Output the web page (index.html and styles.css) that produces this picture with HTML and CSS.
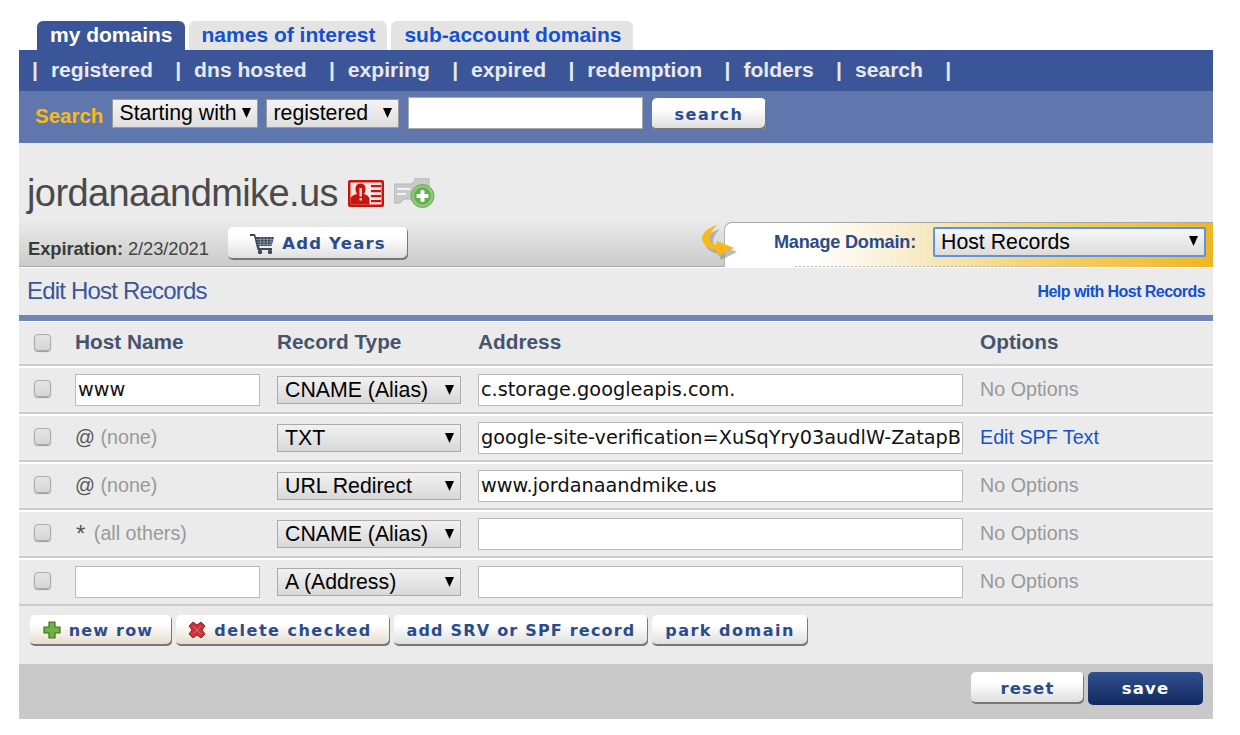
FILE: index.html
```html
<!DOCTYPE html>
<html lang="en">
<head>
<meta charset="utf-8">
<title>Edit Host Records</title>
<link rel="stylesheet" href="styles.css">
</head>
<body>
<div class="page">
  <div class="tabs">
    <a class="tab tab-active">my domains</a>
    <a class="tab">names of interest</a>
    <a class="tab">sub-account domains</a>
  </div>
  <nav class="subnav">
    <span class="pipe">|</span><a>registered</a>
    <span class="pipe">|</span><a>dns hosted</a>
    <span class="pipe">|</span><a>expiring</a>
    <span class="pipe">|</span><a>expired</a>
    <span class="pipe">|</span><a>redemption</a>
    <span class="pipe">|</span><a>folders</a>
    <span class="pipe">|</span><a>search</a>
    <span class="pipe">|</span>
  </nav>
  <div class="searchbar">
    <span class="search-label">Search</span>
    <select class="sel-search s1"><option>Starting with</option></select>
    <select class="sel-search s2"><option>registered</option></select>
    <input class="search-input" type="text">
    <button class="btn btn-search">search</button>
  </div>
  <div class="content">
    <div class="title-row">
      <h1>jordanaandmike.us</h1>
      <svg class="ico-card" width="36" height="27" viewBox="0 0 36 27"><rect x="0" y="0" width="36" height="27" rx="2" fill="#c8140f"/><rect x="2.500" y="2.500" width="31" height="22" fill="#f7e6e3"/><path d="M2.500 24.500 V18 Q4 15 9 14 Q7 11 7.500 8 Q8 3.500 12.500 3.500 Q17 3.500 17.500 8 Q18 11 16 14 Q20 15 21.500 18 V24.500 Z" fill="#c8140f"/><rect x="11.500" y="8" width="2.400" height="8.500" fill="#f7d5d1"/><rect x="11.500" y="18" width="2.400" height="2.500" fill="#f7d5d1"/><rect x="23" y="5" width="10" height="2.200" fill="#c8140f"/><rect x="23" y="10" width="10" height="2.200" fill="#c8140f"/><rect x="23" y="15" width="10" height="2.200" fill="#c8140f"/><rect x="23" y="20" width="10" height="2.200" fill="#c8140f"/></svg>
      <svg class="ico-folder" width="41" height="30" viewBox="0 0 41 30"><path d="M0 6 H17 L21 3 V0 H35 V25 H20 L16 21 H10 L6 25 H0 Z" fill="#c9cbca" stroke="#b5b7b6"/><rect x="3" y="10" width="13" height="2" fill="#f2f2f2"/><rect x="3" y="15" width="9" height="2" fill="#f2f2f2"/><circle cx="28.500" cy="18" r="11.500" fill="#8fca7c" stroke="#6aa858"/><circle cx="28.500" cy="18" r="8.500" fill="#5fb04f"/><rect x="26.500" y="12" width="4" height="12" rx="1" fill="#fff"/><rect x="22.500" y="16" width="12" height="4" rx="1" fill="#fff"/></svg>
    </div>
    <div class="band">
      <div class="expiry"><b>Expiration:</b> 2/23/2021</div>
      <button class="btn btn-years">
        <svg width="24" height="20" viewBox="0 0 24 20"><path d="M0 0 H5 L6 3 H24 L21.500 12 H9 L9.500 14 H22 V16 H7.500 L4 2 H0 Z" fill="#3d4759"/><path d="M6 5.500 H23 M7 8 H22.500 M7.500 10.500 H22 M10.500 3 V12 M14 3 V12 M17.500 3 V12 M21 3 V12" stroke="#8f99a8" stroke-width=".8"/><circle cx="10" cy="18" r="2.200" fill="#3d4759"/><circle cx="20" cy="18" r="2.200" fill="#3d4759"/></svg>
        Add Years
      </button>
      <div class="manage">
        <svg class="ico-arrow" width="36" height="38" viewBox="0 0 36 38"><path d="M15 0 Q0 5 0 14 Q1 23 14 25 L16 31 L32 23 L15 16 L14 20 Q8 19 8 13 Q8 6 15 0 Z" fill="#8f8f8f" opacity=".6" transform="translate(3,4)"/><path d="M15 0 Q0 5 0 14 Q1 23 14 25 L16 31 L32 23 L15 16 L14 20 Q8 19 8 13 Q8 6 15 0 Z" fill="#f8b81c"/></svg>
        <div class="manage-panel">
          <span class="manage-label">Manage Domain:</span>
          <select class="sel-manage"><option>Host Records</option></select>
        </div>
      </div>
    </div>
    <div class="edit-head">
      <h2>Edit Host Records</h2>
      <a class="help">Help with Host Records</a>
    </div>
    <div class="table">
      <div class="row row-head">
        <input type="checkbox" class="chk">
        <span>Host Name</span><span>Record Type</span><span>Address</span><span>Options</span>
      </div>
      <div class="row">
        <input type="checkbox" class="chk">
        <input class="field host" type="text" value="www">
        <select class="sel-type"><option>CNAME (Alias)</option></select>
        <input class="field addr" type="text" value="c.storage.googleapis.com.">
        <span class="muted">No Options</span>
      </div>
      <div class="row">
        <input type="checkbox" class="chk">
        <span class="host-text">@ <i>(none)</i></span>
        <select class="sel-type"><option>TXT</option></select>
        <input class="field addr" type="text" value="google-site-verification=XuSqYry03audlW-ZatapBxxxxxxxxx">
        <a class="link">Edit SPF Text</a>
      </div>
      <div class="row">
        <input type="checkbox" class="chk">
        <span class="host-text">@ <i>(none)</i></span>
        <select class="sel-type"><option>URL Redirect</option></select>
        <input class="field addr" type="text" value="www.jordanaandmike.us">
        <span class="muted">No Options</span>
      </div>
      <div class="row">
        <input type="checkbox" class="chk">
        <span class="host-text"><b class="star">*</b> <i>(all others)</i></span>
        <select class="sel-type"><option>CNAME (Alias)</option></select>
        <input class="field addr" type="text">
        <span class="muted">No Options</span>
      </div>
      <div class="row">
        <input type="checkbox" class="chk">
        <input class="field host" type="text">
        <select class="sel-type"><option>A (Address)</option></select>
        <input class="field addr" type="text">
        <span class="muted">No Options</span>
      </div>
    </div>
    <div class="actions">
      <button class="btn btn-action warm w-new">
        <svg width="18" height="18" viewBox="0 0 18 18"><path d="M6 1 H12 V6 H17 V12 H12 V17 H6 V12 H1 V6 H6 Z" fill="#74b13f" stroke="#3f6e26" stroke-width="1.200" stroke-linejoin="round"/></svg>
        new row
      </button>
      <button class="btn btn-action warm w-del">
        <svg width="18" height="18" viewBox="0 0 18 18"><path d="M5 1 L9 4 L13 1 L17 5 L14 9 L17 13 L13 17 L9 14 L5 17 L1 13 L4 9 L1 5 Z" fill="#c9333b" stroke="#a01f27"/><path d="M5 5 L13 13 M13 5 L5 13" stroke="#e56a6f" stroke-width="1"/></svg>
        delete checked
      </button>
      <button class="btn btn-action w-add">add SRV or SPF record</button>
      <button class="btn btn-action w-park">park domain</button>
    </div>
    <div class="footer">
      <button class="btn btn-reset">reset</button>
      <button class="btn btn-save">save</button>
    </div>
  </div>
</div>
</body>
</html>
```
FILE: styles.css
```css
html, body { margin: 0; padding: 0; background: #fff; }
body { font-family: "Liberation Sans", Arial, sans-serif; overflow: hidden; }
.page { width: 1194px; margin: 21px 0 0 19px; }

.tabs { display: flex; padding-left: 18px; gap: 4px; height: 29px; }
.tab { height: 29px; line-height: 28px; padding: 0 12px 0 13px; border-radius: 6px 6px 0 0; background: #e4e4e4; color: #1450d2; font-size: 21px; font-weight: bold; white-space: nowrap; }
.tab-active { background: #3a5698; color: #fff; }

.subnav { display: flex; align-items: center; height: 41px; box-sizing: border-box; padding: 0 0 1px 13px; background: #3a5698; color: #e6e9f1; font-size: 21.100px; font-weight: bold; }
.pipe { margin-right: 13px; margin-left: 22.300px; }
.pipe:first-child { margin-left: 0; }

select { font-family: "Liberation Sans", Arial, sans-serif; color: #000; appearance: none; border-radius: 0; outline: 0; background-repeat: no-repeat; }
.searchbar { display: flex; align-items: flex-start; height: 52px; padding: 6px 0 0 16px; box-sizing: border-box; background: #5f77ad; }
.search-label { color: #fdb813; font-size: 20.500px; font-weight: bold; width: 77px; margin-top: 7px; }
.sel-search { height: 29px; font-size: 21.300px; line-height: 24px; border: 1px solid #999; padding: 0 0 2px 6.500px; margin-top: 2px; background-image: url("data:image/svg+xml,%3Csvg xmlns='http://www.w3.org/2000/svg' width='9' height='10'%3E%3Cpath d='M0 0H9L4.500 10Z'/%3E%3C/svg%3E"), linear-gradient(#f4f4f4, #dedede); background-position: right 6px top 8px, 0 0; }
.s1 { width: 146px; margin-right: 8px; }
.s2 { width: 133px; margin-right: 9px; }
.search-input { width: 235px; height: 32px; box-sizing: border-box; border: 1px solid #aaa; background: #fff; margin: 0 9px 0 0; }

.btn { display: flex; align-items: center; justify-content: center; gap: 8px; box-sizing: border-box; border: 0; border-radius: 5px; padding: 0; font-family: "DejaVu Sans", sans-serif; font-weight: bold; color: #2b4c8c; letter-spacing: 1.200px; background: linear-gradient(#fff 30%, #dcdcdc); box-shadow: inset -1px -2px 0 #777; white-space: nowrap; }
.btn-search { width: 114px; height: 32px; font-size: 16px; letter-spacing: 1.500px; margin-top: 1px; }

.content { background: #ebebeb; }
.title-row { display: flex; align-items: center; height: 77px; padding: 23px 0 0 8px; box-sizing: border-box; }
h1 { margin: 0 10px 0 0; font-size: 38px; font-weight: normal; color: #4a4a4a; letter-spacing: -0.6px; line-height: 46px; }
.ico-folder { margin-left: 10px; }

.band { display: flex; align-items: flex-end; height: 47px; box-sizing: border-box; background: linear-gradient(#ebebeb, #cbcbcb); border-bottom: 1px solid #a8a8a8; padding-left: 9px; }
.expiry { font-size: 18.400px; color: #444; letter-spacing: -0.1px; width: 200px; padding-bottom: 6px; }
.expiry b { color: #3a3a3a; }
.btn-years { width: 180px; height: 33px; font-size: 16.500px; margin-bottom: 6px; }
.manage { display: flex; align-items: flex-end; margin-left: auto; }
.ico-arrow { margin-right: -14px; margin-bottom: 3px; position: relative; z-index: 1; }
.manage-panel { display: flex; align-items: center; width: 489px; height: 45px; box-sizing: border-box; border-top: 1px solid #a8a8a8; border-left: 1px solid #b5b5b5; border-radius: 8px 0 0 0; background: repeating-linear-gradient(90deg, #b8b8b8 0 2px, transparent 2px 4px) 70px 100% / 290px 1px no-repeat, linear-gradient(90deg, #fff 18%, #f8efd4 35%, #f2d477 62%, #f0b622 100%); margin-bottom: -1px; padding: 0 7px 6px 49px; }
.manage-label { font-size: 18.100px; font-weight: bold; color: #2c4a88; letter-spacing: -0.2px; width: 159px; }
.sel-manage { width: 273px; height: 30px; font-size: 21.300px; line-height: 24px; border: 2px solid #5b93e6; border-radius: 2px; padding: 0 0 1px 6px; background-image: url("data:image/svg+xml,%3Csvg xmlns='http://www.w3.org/2000/svg' width='9' height='10'%3E%3Cpath d='M0 0H9L4.500 10Z'/%3E%3C/svg%3E"), linear-gradient(#f7f7f7, #dcdcdc); background-position: right 6px top 7px, 0 0; }

.edit-head { display: flex; justify-content: space-between; align-items: center; height: 48px; padding: 0 8px 2px 8px; box-sizing: border-box; border-top: 1px solid #fff; }
h2 { margin: 0; font-size: 24px; font-weight: normal; color: #3a5698; letter-spacing: -0.8px; }
.help { font-size: 16px; font-weight: bold; color: #1450d2; letter-spacing: -0.55px; margin-top: 2px; }

.table { border-top: 6px solid #7086b5; }
.row { display: grid; grid-template-columns: 41px 202px 201px 502px 1fr; align-items: center; height: 48px; box-sizing: border-box; padding: 0 0 4px 15px; font-size: 19.700px; background: linear-gradient(#ebebeb 44px, #cbcbcb 44px, #cbcbcb 46px, #fff 46px); }
.row-head { height: 47px; padding: 1px 0 6px 15px; background: linear-gradient(#fff 1px, #ebebeb 1px, #ebebeb 43px, #cbcbcb 43px, #cbcbcb 45px, #fff 45px); font-weight: bold; color: #47536b; font-size: 20.800px; }
.row:last-child { height: 46px; padding-bottom: 2px; background: linear-gradient(#ebebeb 44px, #cbcbcb 44px); }
.chk { appearance: none; margin: 0 0 4px; width: 17px; height: 17px; border: 1px solid #aaa; border-radius: 4px; background: linear-gradient(#e4e4e4, #d6d6d6); box-shadow: 0 1px 1px #999; }
.row-head .chk { margin-bottom: 0; }
.field { height: 32px; box-sizing: border-box; border: 1px solid #bbb; background: #fff; font-family: "DejaVu Sans", sans-serif; font-size: 19.300px; color: #111; padding: 0 2px 2px; outline: 0; }
.host { width: 185px; }
.addr { width: 485px; }
.sel-type { width: 184px; height: 28px; font-size: 21.300px; line-height: 24px; border: 1px solid #aaa; padding: 0 0 0 7px; background-image: url("data:image/svg+xml,%3Csvg xmlns='http://www.w3.org/2000/svg' width='9' height='10'%3E%3Cpath d='M0 0H9L4.500 10Z'/%3E%3C/svg%3E"), linear-gradient(#f2f2f2, #d8d8d8); background-position: right 6px top 8px, 0 0; }
.host-text { color: #555; margin-bottom: 2px; }
.host-text i { font-style: normal; color: #999; }
.star { font-weight: normal; margin-right: 3px; margin-left: 1px; font-size: 24px; line-height: 20px; vertical-align: -2px; }
.muted { color: #999; margin-bottom: 2px; }
.link { color: #1450d2; margin-bottom: 2px; }

.actions { display: flex; gap: 4px; height: 58px; padding: 9px 0 0 11px; box-sizing: border-box; align-items: flex-start; }
.btn-action { height: 31px; font-size: 16px; padding-bottom: 1px; }
.warm { background: linear-gradient(#fff 30%, #e4d9c9); padding-right: 6px; }
.w-new { width: 142px; }
.w-del { width: 214px; letter-spacing: 1.500px; }
.w-add { width: 254px; }
.w-park { width: 156px; letter-spacing: 1.500px; }

.footer { display: flex; justify-content: flex-end; align-items: flex-start; gap: 4px; height: 55px; padding: 8px 10px 0 0; box-sizing: border-box; background: #c9c9c9; }
.btn-reset { width: 113px; height: 32px; font-size: 16.500px; }
.btn-save { width: 115px; height: 33px; font-size: 16.500px; color: #fff; background: linear-gradient(#2f5190, #12295f); box-shadow: none; }
```
